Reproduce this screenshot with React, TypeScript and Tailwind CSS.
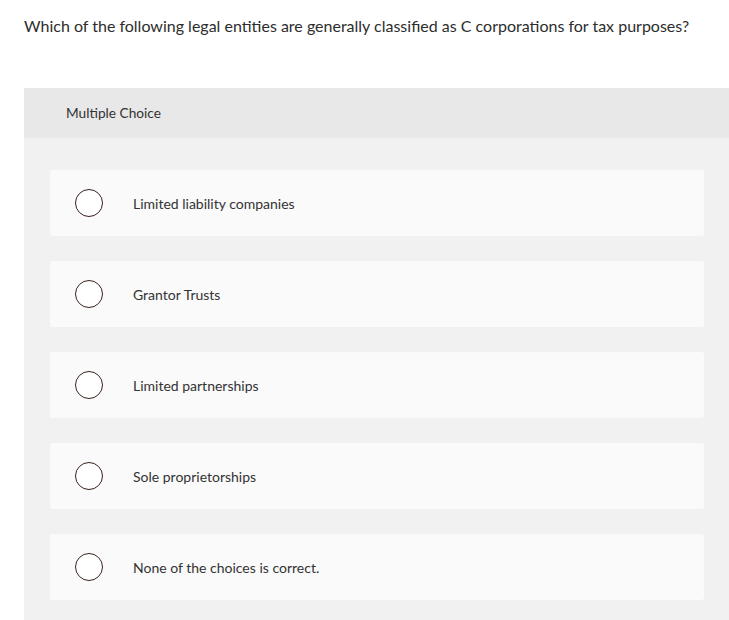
import React from 'react';

const choices = [
  'Limited liability companies',
  'Grantor Trusts',
  'Limited partnerships',
  'Sole proprietorships',
  'None of the choices is correct.',
];

const App: React.FC = () => {
  return (
    <div className="min-h-[620px] bg-white font-['Lato','Liberation_Sans',sans-serif] text-[#333]">
      <div className="px-6 pt-[14px] pb-[51px]">
        <p className="text-[16px] leading-[23px] text-[#2d2d2d]">
          Which of the following legal entities are generally classified as C corporations for tax purposes?
        </p>
      </div>

      <div className="ml-6 bg-[#f1f1f1]">
        <div className="flex h-[50px] items-center bg-[#e8e8e8] pl-[42px] pt-[1px]">
          <span className="text-[13.7px] text-[#333]">Multiple Choice</span>
        </div>

        <div className="flex flex-col gap-[25px] pt-8 pb-5 pl-[26px] pr-[25px]">
          {choices.map((choice) => (
            <label
              key={choice}
              className="flex h-[66px] cursor-pointer items-center rounded-[3px] bg-[#fafafa] pl-[25px]"
            >
              <span className="h-[28px] w-[28px] shrink-0 rounded-full border-[1.5px] border-[#3b1f1f] bg-white" />
              <span className="ml-[30px] text-[14px] text-[#333]">{choice}</span>
            </label>
          ))}
        </div>
      </div>
    </div>
  );
};

export default App;
